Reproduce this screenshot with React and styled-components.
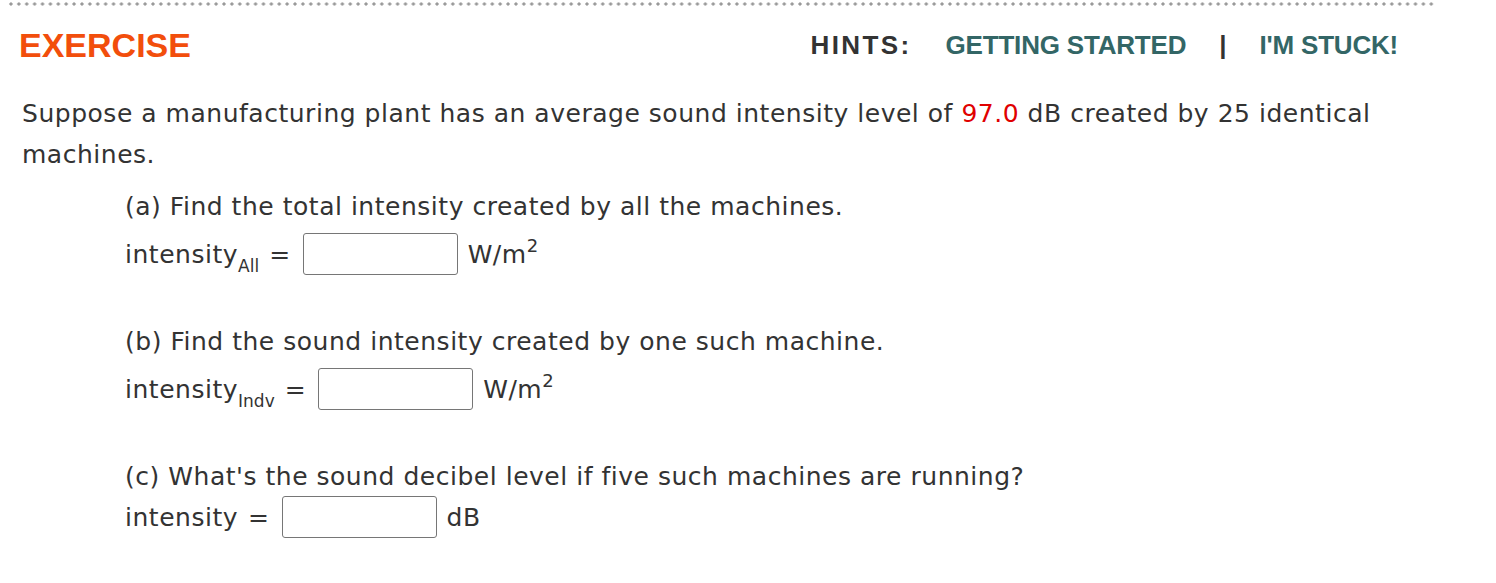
import styled, { createGlobalStyle } from 'styled-components';

const GlobalStyle = createGlobalStyle`
	html, body {
		margin: 0;
		padding: 0;
		background: #fff;
	}
`;

function App() {
	return (
		<>
			<GlobalStyle />
			<Page>
				<Dots />
				<Header>
					<Title>EXERCISE</Title>
					<Hints>
						<HintLabel>HINTS:</HintLabel>
						<HintLink>GETTING STARTED</HintLink>
						<Sep>|</Sep>
						<HintLink>I'M STUCK!</HintLink>
					</Hints>
				</Header>
				<Problem>
					Suppose a manufacturing plant has an average sound intensity level of{' '}
					<Given>97.0</Given> dB created by 25 identical machines.
				</Problem>
				<Parts>
					<Part>
						<Question>(a) Find the total intensity created by all the machines.</Question>
						<Answer $raised>
							<Label>
								intensity<sub>All</sub>
							</Label>
							<Eq>=</Eq>
							<Box type='text' />
							<Unit>
								W/m<sup>2</sup>
							</Unit>
						</Answer>
					</Part>
					<Part>
						<Question>(b) Find the sound intensity created by one such machine.</Question>
						<Answer $raised>
							<Label>
								intensity<sub>Indv</sub>
							</Label>
							<Eq>=</Eq>
							<Box type='text' />
							<Unit>
								W/m<sup>2</sup>
							</Unit>
						</Answer>
					</Part>
					<Part>
						<Question>
							(c) What's the sound decibel level if five such machines are running?
						</Question>
						<Answer>
							<Label>intensity</Label>
							<Eq>=</Eq>
							<Box type='text' />
							<Unit>dB</Unit>
						</Answer>
					</Part>
				</Parts>
			</Page>
		</>
	);
}

export default App;

// ########## styled components ##########
const Page = styled.div`
	width: 1496px;
	height: 583px;
	overflow: hidden;
	font-family: 'DejaVu Sans', Verdana, sans-serif;
	font-size: 25px;
	letter-spacing: 0.52px;
	color: #333;
`;

const Dots = styled.div`
	margin: 2px 0 0 7px;
	width: 1430px;
	height: 4px;
	background-image: radial-gradient(circle, #999 1.4px, transparent 1.8px);
	background-size: 7.9px 4px;
`;

const Header = styled.div`
	display: flex;
	align-items: center;
	justify-content: space-between;
	padding: 0 98px 0 19px;
	height: 78px;
	letter-spacing: 0;
`;

const Title = styled.div`
	font-family: 'Liberation Sans', Arial, sans-serif;
	font-weight: bold;
	font-size: 34px;
	color: #f24e0c;
`;

const Hints = styled.div`
	display: flex;
	align-items: center;
	font-family: 'Liberation Sans', Arial, sans-serif;
	font-weight: bold;
	font-size: 26px;
`;

const HintLabel = styled.span`
	color: #333;
	letter-spacing: 2.4px;
	margin-right: 34px;
`;

const HintLink = styled.span`
	color: #336666;
	letter-spacing: -0.2px;
	cursor: pointer;
`;

const Sep = styled.span`
	color: #333;
	margin: 0 33px 0 33px;
`;

const Problem = styled.p`
	margin: 9px 0 0 22px;
	width: 1400px;
	line-height: 41px;
`;

const Given = styled.span`
	color: #e00000;
`;

const Parts = styled.div`
	margin: 12px 0 0 125px;
	display: flex;
	flex-direction: column;
	gap: 46px;
`;

const Part = styled.div`
	display: flex;
	flex-direction: column;
`;

const Question = styled.div`
	line-height: 40px;
`;

const Answer = styled.div`
	display: flex;
	align-items: center;
	height: 44px;
	margin-top: ${(props) => (props.$raised ? '5px' : '-2px')};

	sub {
		font-size: 17px;
		letter-spacing: 0;
		vertical-align: -9px;
		line-height: 0;
	}

	sup {
		font-size: 18px;
		letter-spacing: 0;
		vertical-align: 11px;
		line-height: 0;
	}
`;

const Label = styled.span`
	line-height: 1;
`;

const Eq = styled.span`
	margin: 0 12px 0 10px;
`;

const Box = styled.input`
	width: 155px;
	height: 42px;
	box-sizing: border-box;
	border: 1px solid #767676;
	border-radius: 3px;
	padding: 0 6px;
	font: inherit;
`;

const Unit = styled.span`
	margin-left: 10px;
`;
